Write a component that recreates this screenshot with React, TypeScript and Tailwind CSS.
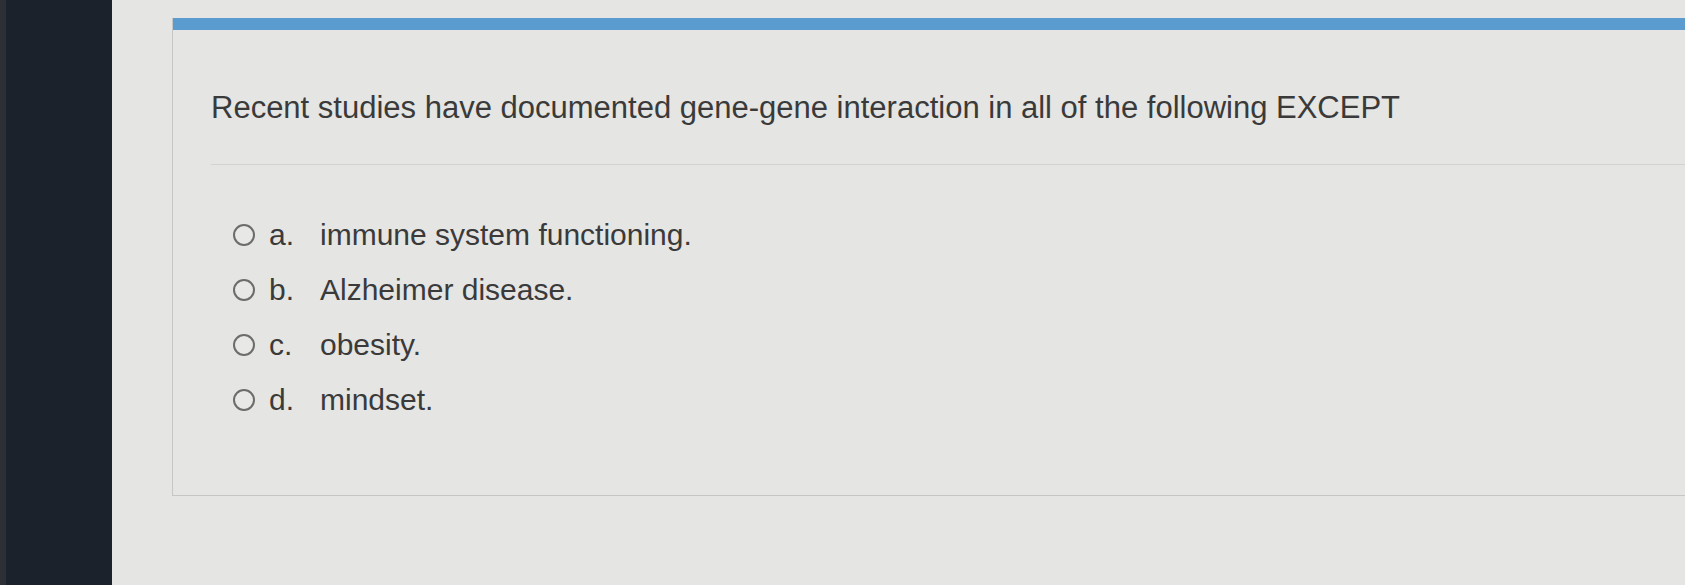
const options = [
  { letter: "a.", text: "immune system functioning." },
  { letter: "b.", text: "Alzheimer disease." },
  { letter: "c.", text: "obesity." },
  { letter: "d.", text: "mindset." },
];

export default function App() {
  return (
    <div className="flex h-[585px] w-full overflow-hidden bg-[#e5e5e3] font-['Liberation_Sans',Arial,sans-serif] text-[#3a3a3a]">
      <div className="w-[112px] shrink-0 border-l-[6px] border-[#2c2f35] bg-[#1b222c]" />
      <div className="flex-1 pl-[60px] pt-[18px]">
        <div className="h-[478px] border-b border-l border-[#c6c6c4]">
          <div className="h-[12px] bg-[#5a9bd0]" />
          <div className="pl-[38px] pt-[60px]">
            <h2 className="text-[31px] leading-[36px]">
              Recent studies have documented gene-gene interaction in all of the following EXCEPT
            </h2>
            <div className="mt-[38px] border-t border-[#d2d2d0]" />
            <ul className="mt-[42px] pl-[22px]">
              {options.map((o) => (
                <li key={o.letter} className="flex h-[55px] items-center">
                  <span className="h-[22px] w-[22px] shrink-0 rounded-full border-2 border-[#6c6c6c] bg-[#e8e8e6]" />
                  <span className="ml-[14px] w-[51px] text-[30px]">{o.letter}</span>
                  <span className="text-[30px]">{o.text}</span>
                </li>
              ))}
            </ul>
          </div>
        </div>
      </div>
    </div>
  );
}
